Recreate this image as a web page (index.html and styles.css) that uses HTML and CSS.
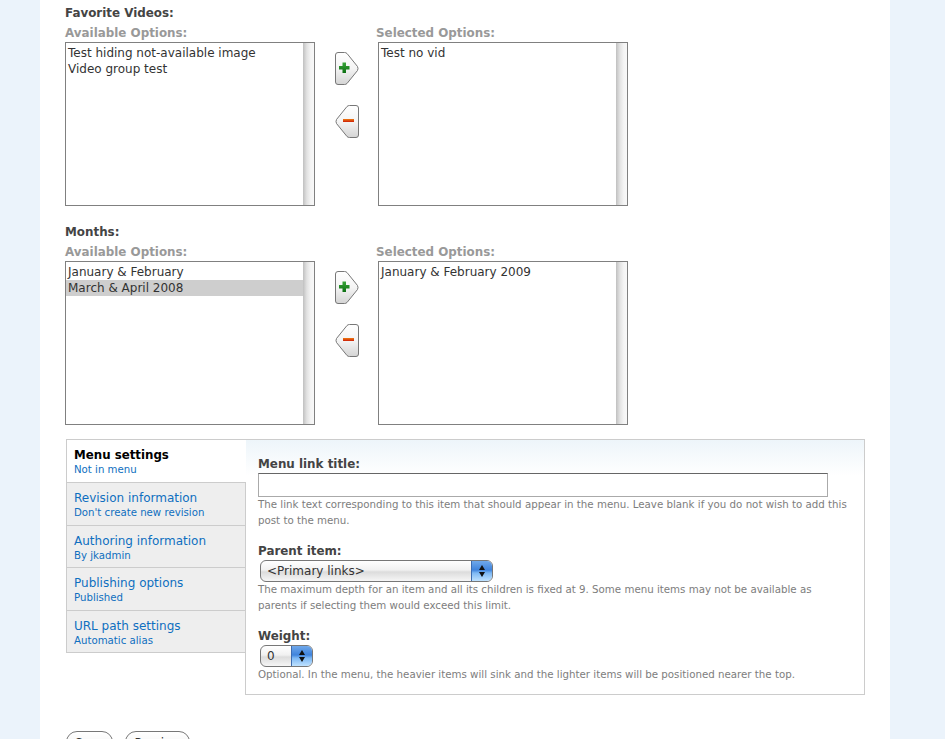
FILE: index.html
```html
<!DOCTYPE html>
<html lang="en">
<head>
<meta charset="utf-8">
<title>Edit</title>
<link rel="stylesheet" href="styles.css">
</head>
<body>
<svg class="defs" width="0" height="0" aria-hidden="true">
  <defs>
    <linearGradient id="btn" x1="0" y1="0" x2="0" y2="1">
      <stop offset="0" stop-color="#ffffff"/><stop offset="0.5" stop-color="#f4f4f4"/><stop offset="1" stop-color="#d4d4d4"/>
    </linearGradient>
    <linearGradient id="grn" x1="0" y1="0" x2="0" y2="1">
      <stop offset="0" stop-color="#3aa63a"/><stop offset="1" stop-color="#0c6f12"/>
    </linearGradient>
    <linearGradient id="red" x1="0" y1="0" x2="0" y2="1">
      <stop offset="0" stop-color="#ee7a10"/><stop offset="1" stop-color="#cc1f08"/>
    </linearGradient>
    <symbol id="add" viewBox="0 0 24 33">
      <path d="M3 .5H9.500Q11 .5 12 1.500L22.500 14.500Q23.500 16.500 22.500 18.500L12 31.500Q11 32.500 9.500 32.500H3Q.5 32.500 .5 30V3Q.5 .5 3 .5Z" fill="url(#btn)" stroke="#777"/>
      <path d="M7.500 10.500H11V14H14.500V17.500H11V21H7.500V17.500H4V14H7.500Z" fill="url(#grn)"/>
    </symbol>
    <symbol id="rem" viewBox="0 0 24 33">
      <path d="M21 .5H14.500Q13 .5 12 1.500L1.500 14.500Q.5 16.500 1.500 18.500L12 31.500Q13 32.500 14.500 32.500H21Q23.500 32.500 23.500 30V3Q23.500 .5 21 .5Z" fill="url(#btn)" stroke="#777"/>
      <rect x="8" y="14" width="11" height="3" fill="url(#red)"/>
    </symbol>
  </defs>
</svg>
<div class="page">
  <section class="picker">
    <div class="field-title">Favorite Videos:</div>
    <div class="picker-row">
      <div class="col">
        <div class="col-label">Available Options:</div>
        <div class="listbox"><ul class="options"><li>Test hiding not-available image</li><li>Video group test</li></ul><div class="track"></div></div>
      </div>
      <div class="arrows">
        <svg class="arrow" width="24" height="33"><use href="#add"/></svg>
        <svg class="arrow" width="24" height="33"><use href="#rem"/></svg>
      </div>
      <div class="col">
        <div class="col-label">Selected Options:</div>
        <div class="listbox"><ul class="options"><li>Test no vid</li></ul><div class="track"></div></div>
      </div>
    </div>
  </section>
  <section class="picker">
    <div class="field-title">Months:</div>
    <div class="picker-row">
      <div class="col">
        <div class="col-label">Available Options:</div>
        <div class="listbox"><ul class="options"><li>January &amp; February</li><li class="selected">March &amp; April 2008</li></ul><div class="track"></div></div>
      </div>
      <div class="arrows">
        <svg class="arrow" width="24" height="33"><use href="#add"/></svg>
        <svg class="arrow" width="24" height="33"><use href="#rem"/></svg>
      </div>
      <div class="col">
        <div class="col-label">Selected Options:</div>
        <div class="listbox"><ul class="options"><li>January &amp; February 2009</li></ul><div class="track"></div></div>
      </div>
    </div>
  </section>
  <section class="vtabs">
    <nav class="tablist">
      <a class="tab active"><strong>Menu settings</strong><small>Not in menu</small></a>
      <a class="tab"><strong>Revision information</strong><small>Don't create new revision</small></a>
      <a class="tab"><strong>Authoring information</strong><small>By jkadmin</small></a>
      <a class="tab"><strong>Publishing options</strong><small>Published</small></a>
      <a class="tab"><strong>URL path settings</strong><small>Automatic alias</small></a>
    </nav>
    <div class="panel">
      <div class="form-item">
        <label class="form-label">Menu link title:</label>
        <div class="text-input"></div>
        <p class="hint">The link text corresponding to this item that should appear in the menu. Leave blank if you do not wish to add this post to the menu.</p>
      </div>
      <div class="form-item">
        <label class="form-label">Parent item:</label>
        <div class="mac-select wide"><span class="sel-text">&lt;Primary links&gt;</span><span class="stepper"><i class="up"></i><i class="down"></i></span></div>
        <p class="hint">The maximum depth for an item and all its children is fixed at 9. Some menu items may not be available as parents if selecting them would exceed this limit.</p>
      </div>
      <div class="form-item">
        <label class="form-label">Weight:</label>
        <div class="mac-select narrow"><span class="sel-text">0</span><span class="stepper"><i class="up"></i><i class="down"></i></span></div>
        <p class="hint">Optional. In the menu, the heavier items will sink and the lighter items will be positioned nearer the top.</p>
      </div>
    </div>
  </section>
  <div class="actions">
    <button class="btn save">Save</button>
    <button class="btn preview">Preview</button>
  </div>
</div>
</body>
</html>
```
FILE: styles.css
```css
html, body {
  margin: 0;
  height: 739px;
  overflow: hidden;
}
body {
  background: #ebf3fb;
  font-family: "DejaVu Sans", Verdana, sans-serif;
  color: #3b3b3b;
}
.defs { position: absolute; }
.page {
  margin-left: 40px;
  width: 850px;
  height: 739px;
  box-sizing: border-box;
  overflow: hidden;
  background: #fff;
  padding: 6px 0 0 25px;
}
.picker { margin-bottom: 19px; }
.field-title {
  font-size: 11.900px;
  line-height: 14px;
  font-weight: bold;
  color: #444;
  margin-bottom: 6px;
}
.picker-row { display: flex; }
.col { width: 250px; }
.col:last-child { margin-left: -2px; }
.col:last-child .listbox { margin-left: 2px; }
.col-label {
  font-size: 11.900px;
  line-height: 14px;
  font-weight: bold;
  color: #999;
  margin-bottom: 2px;
}
.listbox {
  display: flex;
  width: 250px;
  height: 164px;
  box-sizing: border-box;
  border: 1px solid #808080;
  background: #fff;
}
.options {
  flex: 1;
  margin: 0;
  padding: 2px 0 0;
  list-style: none;
  font-size: 12px;
  line-height: 16px;
  color: #333;
}
.options li { padding-left: 2px; }
.options li.selected { background: #cecece; }
.track {
  width: 11px;
  background: linear-gradient(to right, #c0c0c0, #e2e2e2 35%, #f4f4f4 70%, #f8f8f8);
}
.arrows {
  width: 63px;
  box-sizing: border-box;
  padding: 26px 0 0 20px;
  display: flex;
  flex-direction: column;
  gap: 20px;
}
.arrow { display: block; }
.vtabs {
  display: flex;
  width: 799px;
  height: 256px;
  margin-left: 1px;
  margin-top: -5px;
}
.tablist {
  width: 180px;
  flex: none;
  align-self: flex-start;
  box-sizing: border-box;
  position: relative;
  z-index: 1;
  border-top: 1px solid #ccc;
  border-left: 1px solid #ccc;
}
.tab {
  display: block;
  box-sizing: border-box;
  height: 42.500px;
  padding: 7px 0 0 7px;
  background: #eee;
  border-bottom: 1px solid #ccc;
  border-right: 1px solid #ccc;
  color: #0f6fc0;
}
.tab strong {
  display: block;
  font-weight: normal;
  font-size: 12px;
  line-height: 16px;
}
.tab small {
  display: block;
  font-size: 10.200px;
  line-height: 13px;
}
.tab.active { background: #fff; border-right: 0; height: 43px; }
.tab.active strong { font-weight: bold; font-size: 11.800px; color: #000; }
.panel {
  flex: 1;
  min-width: 0;
  box-sizing: border-box;
  padding: 16px 16px 0 12px;
  background: linear-gradient(to bottom, #edf5fa, #fff 36px);
  border: 1px solid #ccc;
  margin-left: -1px;
}
.form-item { margin-bottom: 15px; }
.form-label {
  display: block;
  font-size: 11.900px;
  line-height: 16px;
  font-weight: bold;
  color: #444;
  margin-bottom: 1px;
}
.text-input {
  width: 570px;
  height: 24px;
  box-sizing: border-box;
  border: 1px solid #aaa;
  border-top-color: #666;
  background: #fff;
}
.hint {
  margin: 0;
  font-size: 10.250px;
  line-height: 15.500px;
  color: #7d7d7d;
}
.mac-select {
  display: flex;
  height: 22px;
  box-sizing: border-box;
  margin-left: 2px;
  border: 1px solid #777;
  border-radius: 6px;
  overflow: hidden;
  background: linear-gradient(to bottom, #fff, #f1f1f1 45%, #dcdcdc 55%, #f6f6f6);
  font-size: 12px;
  line-height: 21px;
  color: #333;
}
.mac-select.wide { width: 233px; }
.mac-select.narrow { width: 53px; }
.sel-text { flex: 1; padding-left: 6px; }
.stepper {
  width: 20px;
  display: flex;
  flex-direction: column;
  align-items: center;
  justify-content: center;
  gap: 2px;
  background: linear-gradient(to bottom, #6fa8ea, #3f83dc 45%, #7db8f4 60%, #bfe2ff);
  border-left: 1px solid #3d6cb0;
}
.stepper .up, .stepper .down {
  width: 0;
  height: 0;
  border-left: 3px solid transparent;
  border-right: 3px solid transparent;
}
.stepper .up { border-bottom: 5px solid #111; }
.stepper .down { border-top: 5px solid #111; }
.actions {
  display: flex;
  gap: 12px;
  margin: 36px 0 0 1px;
}
.btn {
  height: 24px;
  padding: 0 8px;
  border: 1px solid #777;
  border-radius: 11px;
  background: linear-gradient(to bottom, #fff, #eee);
  font-family: inherit;
  font-size: 12px;
  color: #333;
}
```
